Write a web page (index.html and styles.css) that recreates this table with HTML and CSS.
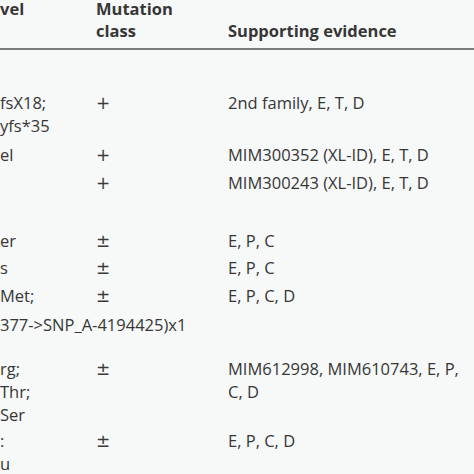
FILE: index.html
```html
<!DOCTYPE html>
<html>
<head>
<meta charset="utf-8">
<link rel="stylesheet" href="styles.css">
</head>
<body>
<table class="tbl">
  <thead>
    <tr>
      <th class="c1">vel</th>
      <th class="c2">Mutation<br>class</th>
      <th class="c3 bottom">Supporting evidence</th>
    </tr>
  </thead>
  <tbody>
    <tr class="p41"><td class="c1">fsX18;<br>yfs*35</td><td class="c2"><span class="sym">+</span></td><td class="c3">2nd family, E, T, D</td></tr>
    <tr class="p6"><td class="c1">el</td><td class="c2"><span class="sym">+</span></td><td class="c3">MIM300352 (XL-ID), E, T, D</td></tr>
    <tr class="p5"><td class="c1"></td><td class="c2"><span class="sym">+</span></td><td class="c3">MIM300243 (XL-ID), E, T, D</td></tr>
    <tr class="p35"><td class="c1">er</td><td class="c2"><span class="sym">±</span></td><td class="c3">E, P, C</td></tr>
    <tr class="p4"><td class="c1">s</td><td class="c2"><span class="sym">±</span></td><td class="c3">E, P, C</td></tr>
    <tr class="p5"><td class="c1">Met;</td><td class="c2"><span class="sym">±</span></td><td class="c3">E, P, C, D</td></tr>
    <tr class="p6"><td class="c1 wide" colspan="3">377-&gt;SNP_A-4194425)x1</td></tr>
    <tr class="p21"><td class="c1">rg;<br>Thr;<br>Ser</td><td class="c2"><span class="sym">±</span></td><td class="c3">MIM612998, MIM610743, E, P,<br>C, D</td></tr>
    <tr class="p3"><td class="c1">:<br>u</td><td class="c2"><span class="sym">±</span></td><td class="c3">E, P, C, D</td></tr>
  </tbody>
</table>
</body>
</html>
```
FILE: styles.css
```css
html, body {
  margin: 0;
  padding: 0;
  background: #f7f8f8;
}
body {
  width: 474px;
  height: 474px;
  overflow: hidden;
  font-family: "Open Sans", "Noto Sans", sans-serif;
  font-size: 16.5px;
  color: #363636;
}
.tbl {
  border-collapse: collapse;
  table-layout: fixed;
  width: 474px;
  margin-top: -2px;
}
.tbl th, .tbl td {
  padding: 0;
  text-align: left;
  vertical-align: top;
  line-height: 23px;
  white-space: nowrap;
}
.tbl th {
  font-weight: 700;
  padding-bottom: 6px;
  border-bottom: 2px solid #7a7a7a;
  line-height: 22px;
}
.tbl th.bottom { vertical-align: bottom; }
.c1 { width: 96px; }
.c2 { width: 132px; }
.c3 { width: 246px; }
.sym {
  font-family: "DejaVu Sans", sans-serif;
  font-size: 17px;
  line-height: 0;
  color: #3a3a3a;
}
.p3 td { padding-top: 3px; }
.p4 td { padding-top: 4px; }
.p5 td { padding-top: 5px; }
.p6 td { padding-top: 6px; }
.p21 td { padding-top: 21px; }
.p35 td { padding-top: 35px; }
.p41 td { padding-top: 41px; }
```
